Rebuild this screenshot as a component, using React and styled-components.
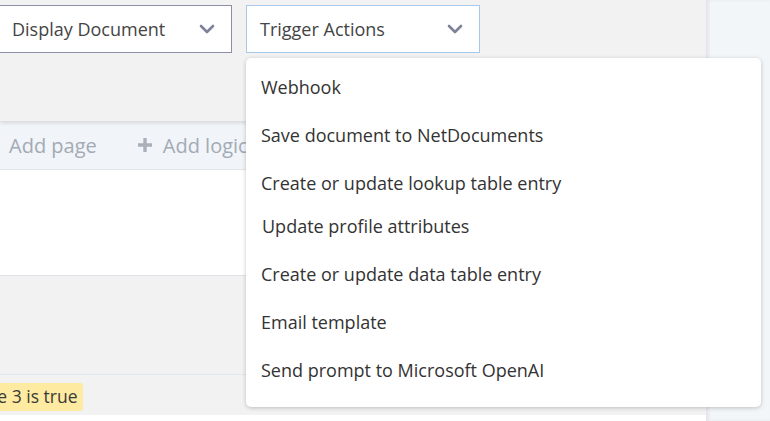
import React from 'react';
import styled, { createGlobalStyle } from 'styled-components';

const GlobalStyle = createGlobalStyle`
  html, body {
    margin: 0;
    padding: 0;
    background: #ffffff;
    font-family: "Open Sans", "Noto Sans", sans-serif;
  }
`

const Page = styled.div`
  display: flex;
  width: 770px;
  height: 421px;
  overflow: hidden;
  position: relative;
`

const Main = styled.div`
  width: 706px;
  display: flex;
  flex-direction: column;
  background: #f2f2f2;
  overflow: hidden;
`

const SidePanel = styled.div`
  flex: 1;
  background: #f3f6f9;
  box-shadow: inset 2px 0 3px rgba(0, 0, 0, 0.06);
  border-left: 1px solid #e4e6e9;
`

const TopPanel = styled.div`
  height: 121px;
  box-sizing: border-box;
  padding-top: 5px;
  background: #f2f2f2;
  position: relative;
  z-index: 2;
  box-shadow: 0 2px 4px rgba(0, 0, 0, 0.12);
`

const SelectRow = styled.div`
  display: flex;
  gap: 14px;
  margin-left: -2px;
`

const SelectBox = styled.div`
  width: 234px;
  height: 48px;
  box-sizing: border-box;
  display: flex;
  align-items: center;
  justify-content: space-between;
  padding: 0 16px 0 13px;
  background: #ffffff;
  border: 1px solid ${({ $active }) => ($active ? '#a9c9ea' : '#8c8fa6')};
  color: #444444;
  font-size: 18px;
`

const Toolbar = styled.div`
  height: 48px;
  display: flex;
  align-items: center;
  gap: 40px;
  padding-left: 9px;
  background: #f1f4f8;
  border-bottom: 1px solid #e1e5ea;
  color: #a3aab5;
  font-size: 20px;
`

const ToolItem = styled.div`
  display: flex;
  align-items: center;
  gap: 10px;
`

const Canvas = styled.div`
  height: 105px;
  background: #ffffff;
  border-bottom: 1px solid #dfe3e8;
`

const Gap = styled.div`
  height: 98px;
  background: #f2f2f2;
  border-bottom: 1px solid #e2e8ef;
`

const Footer = styled.div`
  height: 40px;
  display: flex;
  align-items: center;
  padding-top: 4px;
  box-sizing: border-box;
  margin-left: -45px;
`

const Badge = styled.span`
  background: #feeaa1;
  color: #3a3a3a;
  font-size: 17.5px;
  padding: 1px 6px 2px 20px;
  border-radius: 3px;
  line-height: 25px;
`

const BottomStrip = styled.div`
  flex: 1;
  background: #ffffff;
`

const Menu = styled.div`
  position: absolute;
  top: 58px;
  left: 246px;
  width: 515px;
  height: 349px;
  box-sizing: border-box;
  padding-top: 5px;
  background: #ffffff;
  border-radius: 5px;
  box-shadow: 0 1px 4px rgba(0, 0, 0, 0.22);
  z-index: 5;
`

const MenuItem = styled.div`
  height: ${({ $short }) => ($short ? 43 : 48)}px;
  box-sizing: border-box;
  padding-bottom: ${({ $short }) => ($short ? 5 : 0)}px;
  display: flex;
  align-items: center;
  padding-left: ${({ $short }) => ($short ? 16 : 15)}px;
  color: #333333;
  font-size: 18px;
`

const Chevron = () => (
  <svg width="16" height="10" viewBox="0 0 16 10">
    <path d="M2 2 L8 8 L14 2" fill="none" stroke="#7d8199" strokeWidth="2.6" strokeLinecap="round" strokeLinejoin="round" />
  </svg>
)

const Plus = () => (
  <svg width="16" height="16" viewBox="0 0 16 16">
    <path d="M8 1 V15 M1 8 H15" stroke="#a9b0ba" strokeWidth="3.4" />
  </svg>
)

const items = [
  { label: 'Webhook' },
  { label: 'Save document to NetDocuments' },
  { label: 'Create or update lookup table entry' },
  { label: 'Update profile attributes', short: true },
  { label: 'Create or update data table entry' },
  { label: 'Email template' },
  { label: 'Send prompt to Microsoft OpenAI' },
]

const App = () => {
  return (
    <>
      <GlobalStyle />
      <Page>
        <Main>
          <TopPanel>
            <SelectRow>
              <SelectBox>
                Display Document
                <Chevron />
              </SelectBox>
              <SelectBox $active>
                Trigger Actions
                <Chevron />
              </SelectBox>
            </SelectRow>
          </TopPanel>
          <Toolbar>
            <ToolItem>Add page</ToolItem>
            <ToolItem>
              <Plus />
              Add logic
            </ToolItem>
          </Toolbar>
          <Canvas />
          <Gap />
          <Footer>
            <Badge>rule 3 is true</Badge>
          </Footer>
          <BottomStrip />
        </Main>
        <SidePanel />
        <Menu>
          {items.map((it) => (
            <MenuItem key={it.label} $short={it.short}>
              {it.label}
            </MenuItem>
          ))}
        </Menu>
      </Page>
    </>
  );
};

export default App;
